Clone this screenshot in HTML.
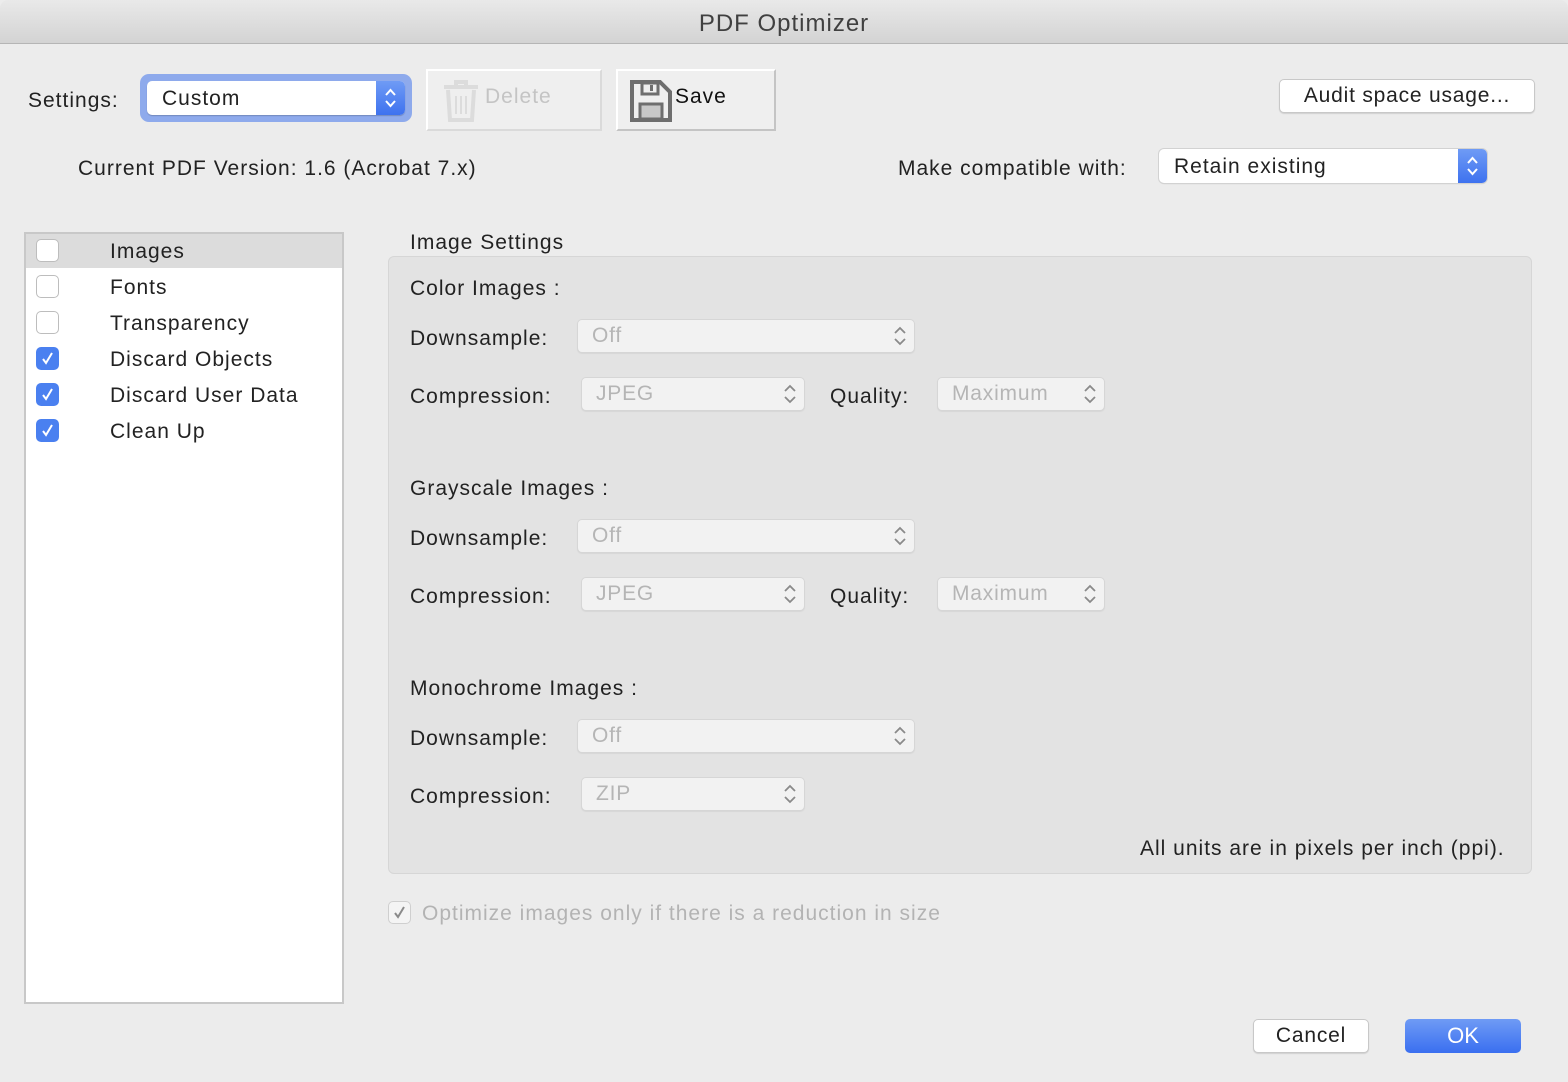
<!DOCTYPE html>
<html><head><meta charset="utf-8"><style>
*{box-sizing:border-box;margin:0;padding:0}
body{width:1568px;height:1082px;overflow:hidden;background:#ececec;font-family:"Liberation Sans",sans-serif;color:#222;position:relative}
.t{position:absolute;font-size:21px;line-height:24px;white-space:nowrap;letter-spacing:1px;margin-top:1px}
.g{color:#b3b3b3}
.sel{position:absolute;background:#f2f2f2;border:1px solid #d6d6d6;border-radius:5px;box-shadow:0 1px 1px rgba(0,0,0,.06)}
.sel span{position:absolute;left:14px;top:50%;transform:translateY(-50%);font-size:21px;color:#b5b5b5;letter-spacing:0.8px}
.sel svg{position:absolute;right:7px;top:50%;transform:translateY(-50%)}
.btn{position:absolute;background:#fff;border:1px solid #c8c8c8;border-radius:5px;box-shadow:0 1px 1px rgba(0,0,0,.12);font-size:21px;text-align:center;letter-spacing:0.8px}
.cb{position:absolute;width:23px;height:23px;border-radius:5px;background:#fff;border:1px solid #bdbdbd}
.cb.on{background:#4a80f0;border-color:#4a80f0}
</style></head><body>
<div style="position:absolute;left:0;top:0;width:1568px;height:44px;background:linear-gradient(#e9e9e9,#d3d3d3);border-bottom:1px solid #b5b5b5;border-radius:8px 8px 0 0"></div>
<div class="t" style="left:0;width:1568px;text-align:center;top:11px;font-size:24px;color:#404040">PDF Optimizer</div>

<div class="t" style="left:28px;top:88px">Settings:</div>
<div style="position:absolute;left:140px;top:74px;width:272px;height:48px;background:#8eaaec;border-radius:9px"></div>
<div style="position:absolute;left:147px;top:81px;width:258px;height:34px;background:#fff;border-radius:5px;box-shadow:0 1px 1px rgba(0,0,0,.2)"></div>
<div class="t" style="left:162px;top:86px">Custom</div>
<div style="position:absolute;left:376px;top:81px;width:29px;height:34px;background:linear-gradient(#6f9bf5,#3e72ef);border-radius:0 5px 5px 0"></div>
<svg style="position:absolute;left:383px;top:86px" width="15" height="24"><path d="M3 9 L7.5 4 L12 9 M3 15 L7.5 20 L12 15" stroke="#fff" stroke-width="2" fill="none"/></svg>

<div style="position:absolute;left:426px;top:69px;width:176px;height:62px;background:#efefef;border:2px solid #dadada;border-top-color:#fff;border-left-color:#fff"></div>
<svg style="position:absolute;left:440px;top:78px" width="42" height="46"><g fill="none" stroke="#dcdcdc" stroke-width="4"><path d="M4 9 H38 M16 9 V4 H26 V9"/><path d="M8 12 L10 42 H32 L34 12"/><path d="M16 18 V36 M21 18 V36 M26 18 V36" stroke-width="2"/></g></svg>
<div class="t" style="left:485px;top:84px;color:#c4c4c4">Delete</div>

<div style="position:absolute;left:616px;top:69px;width:160px;height:62px;background:#efefef;border:2px solid #c4c4c4;border-top-color:#fff;border-left-color:#fff"></div>
<svg style="position:absolute;left:630px;top:80px" width="42" height="42"><path d="M2 2 H30 L40 12 V40 H2 Z" fill="none" stroke="#6e6e6e" stroke-width="4"/><rect x="12" y="3" width="16" height="11" fill="none" stroke="#6e6e6e" stroke-width="3"/><rect x="20" y="5" width="3" height="6" fill="#6e6e6e"/><rect x="10" y="24" width="22" height="15" fill="#c8c8c8" stroke="#6e6e6e" stroke-width="3"/></svg>
<div class="t" style="left:675px;top:84px;color:#111">Save</div>

<div class="btn" style="left:1279px;top:79px;width:256px;height:34px;line-height:32px">Audit space usage...</div>

<div class="t" style="left:78px;top:156px">Current PDF Version: 1.6 (Acrobat 7.x)</div>
<div class="t" style="left:898px;top:156px">Make compatible with:</div>
<div style="position:absolute;left:1159px;top:149px;width:328px;height:34px;background:#fff;border-radius:5px;box-shadow:0 0 0 1px #d2d2d2,0 1px 1px rgba(0,0,0,.15)"></div>
<div class="t" style="left:1174px;top:154px">Retain existing</div>
<div style="position:absolute;left:1458px;top:149px;width:29px;height:34px;background:linear-gradient(#6f9bf5,#3e72ef);border-radius:0 5px 5px 0"></div>
<svg style="position:absolute;left:1465px;top:154px" width="15" height="24"><path d="M3 9 L7.5 4 L12 9 M3 15 L7.5 20 L12 15" stroke="#fff" stroke-width="2" fill="none"/></svg>

<div style="position:absolute;left:24px;top:232px;width:320px;height:772px;background:#fff;border:2px solid #c8c8c8"></div>
<div style="position:absolute;left:26px;top:234px;width:316px;height:34px;background:#dcdcdc"></div>
<div class="cb" style="left:36px;top:239px"></div><div class="t" style="left:110px;top:239px">Images</div>
<div class="cb" style="left:36px;top:275px"></div><div class="t" style="left:110px;top:275px">Fonts</div>
<div class="cb" style="left:36px;top:311px"></div><div class="t" style="left:110px;top:311px">Transparency</div>
<div class="cb on" style="left:36px;top:347px"><svg width="21" height="21"><path d="M6 11 L9 15 L15 5" stroke="#fff" stroke-width="2" fill="none"/></svg></div><div class="t" style="left:110px;top:347px">Discard Objects</div>
<div class="cb on" style="left:36px;top:383px"><svg width="21" height="21"><path d="M6 11 L9 15 L15 5" stroke="#fff" stroke-width="2" fill="none"/></svg></div><div class="t" style="left:110px;top:383px">Discard User Data</div>
<div class="cb on" style="left:36px;top:419px"><svg width="21" height="21"><path d="M6 11 L9 15 L15 5" stroke="#fff" stroke-width="2" fill="none"/></svg></div><div class="t" style="left:110px;top:419px">Clean Up</div>

<div class="t" style="left:410px;top:230px">Image Settings</div>
<div style="position:absolute;left:388px;top:256px;width:1144px;height:618px;background:#e3e3e3;border:1px solid #d6d6d6;border-radius:6px"></div>

<div class="t" style="left:410px;top:276px">Color Images :</div>
<div class="t" style="left:410px;top:326px">Downsample:</div>
<div class="sel" style="left:577px;top:319px;width:338px;height:34px"><span>Off</span><svg width="14" height="24"><path d="M2 9 L7 4 L12 9 M2 15 L7 20 L12 15" stroke="#8a8a8a" stroke-width="1.8" fill="none"/></svg></div>
<div class="t" style="left:410px;top:384px">Compression:</div>
<div class="sel" style="left:581px;top:377px;width:224px;height:34px"><span>JPEG</span><svg width="14" height="24"><path d="M2 9 L7 4 L12 9 M2 15 L7 20 L12 15" stroke="#8a8a8a" stroke-width="1.8" fill="none"/></svg></div>
<div class="t" style="left:830px;top:384px">Quality:</div>
<div class="sel" style="left:937px;top:377px;width:168px;height:34px"><span>Maximum</span><svg width="14" height="24"><path d="M2 9 L7 4 L12 9 M2 15 L7 20 L12 15" stroke="#8a8a8a" stroke-width="1.8" fill="none"/></svg></div>

<div class="t" style="left:410px;top:476px">Grayscale Images :</div>
<div class="t" style="left:410px;top:526px">Downsample:</div>
<div class="sel" style="left:577px;top:519px;width:338px;height:34px"><span>Off</span><svg width="14" height="24"><path d="M2 9 L7 4 L12 9 M2 15 L7 20 L12 15" stroke="#8a8a8a" stroke-width="1.8" fill="none"/></svg></div>
<div class="t" style="left:410px;top:584px">Compression:</div>
<div class="sel" style="left:581px;top:577px;width:224px;height:34px"><span>JPEG</span><svg width="14" height="24"><path d="M2 9 L7 4 L12 9 M2 15 L7 20 L12 15" stroke="#8a8a8a" stroke-width="1.8" fill="none"/></svg></div>
<div class="t" style="left:830px;top:584px">Quality:</div>
<div class="sel" style="left:937px;top:577px;width:168px;height:34px"><span>Maximum</span><svg width="14" height="24"><path d="M2 9 L7 4 L12 9 M2 15 L7 20 L12 15" stroke="#8a8a8a" stroke-width="1.8" fill="none"/></svg></div>

<div class="t" style="left:410px;top:676px">Monochrome Images :</div>
<div class="t" style="left:410px;top:726px">Downsample:</div>
<div class="sel" style="left:577px;top:719px;width:338px;height:34px"><span>Off</span><svg width="14" height="24"><path d="M2 9 L7 4 L12 9 M2 15 L7 20 L12 15" stroke="#8a8a8a" stroke-width="1.8" fill="none"/></svg></div>
<div class="t" style="left:410px;top:784px">Compression:</div>
<div class="sel" style="left:581px;top:777px;width:224px;height:34px"><span>ZIP</span><svg width="14" height="24"><path d="M2 9 L7 4 L12 9 M2 15 L7 20 L12 15" stroke="#8a8a8a" stroke-width="1.8" fill="none"/></svg></div>

<div class="t" style="left:1140px;top:836px">All units are in pixels per inch (ppi).</div>

<div class="cb" style="left:388px;top:901px;background:#f4f4f4;border-color:#cfcfcf"><svg width="21" height="21"><path d="M6 11 L9 15 L15 5" stroke="#8a8a8a" stroke-width="2" fill="none"/></svg></div>
<div class="t g" style="left:422px;top:901px">Optimize images only if there is a reduction in size</div>

<div class="btn" style="left:1253px;top:1019px;width:116px;height:34px;line-height:32px">Cancel</div>
<div style="position:absolute;left:1405px;top:1019px;width:116px;height:34px;border-radius:5px;background:linear-gradient(#6f9bf5,#3a6ff0);color:#fff;font-size:22px;line-height:34px;text-align:center">OK</div>
</body></html>
